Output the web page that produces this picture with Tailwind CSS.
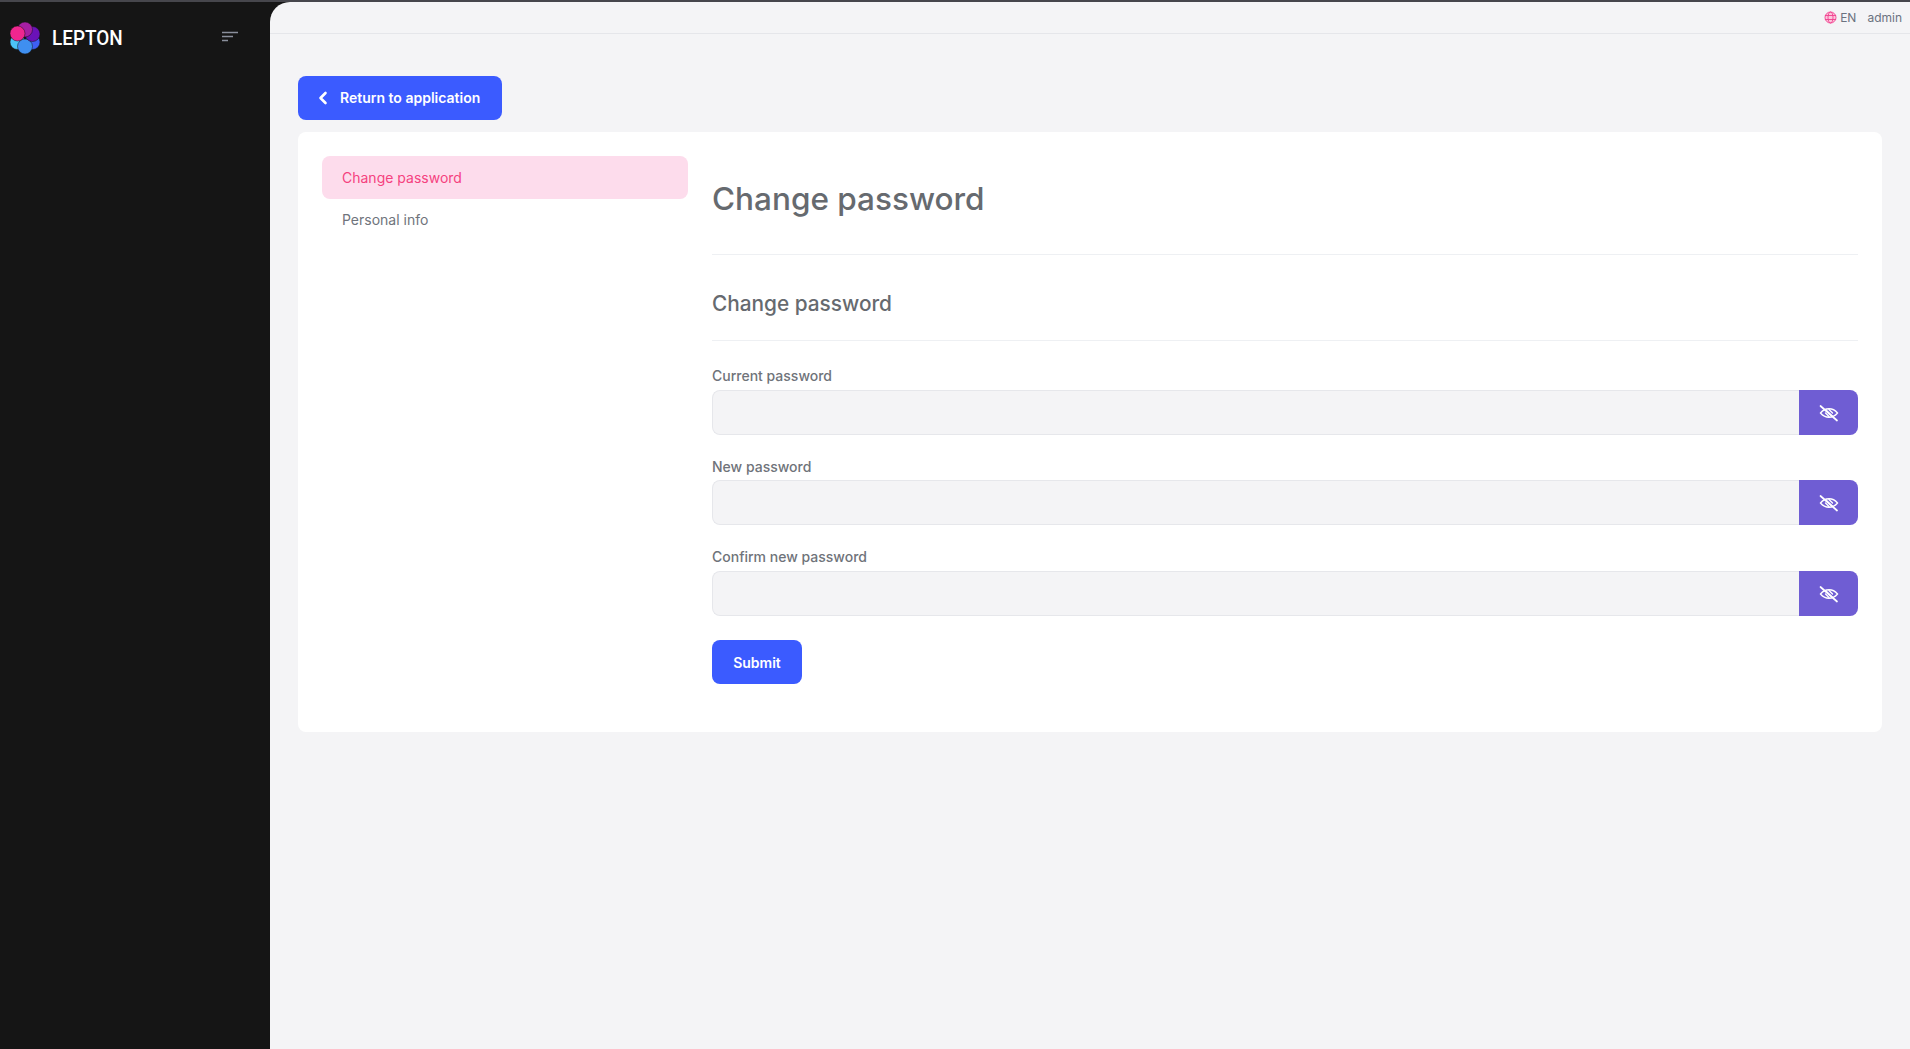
<!DOCTYPE html>
<html><head><meta charset="utf-8"><title>Change password</title>
<script src="https://cdn.jsdelivr.net/npm/@tailwindcss/browser@4"></script></head>
<body class="m-0 bg-[#151515] font-['Inter',sans-serif]">
<div class="h-[1049px] w-[1910px] overflow-hidden flex flex-col">
<div class="h-[2px] bg-[#46464c] shrink-0"></div>
<div class="flex flex-1 min-h-0">
<aside class="w-[270px] shrink-0 bg-[#151515]">
<div class="h-[70px] relative">
<svg class="absolute left-[9px] top-[18px]" width="32" height="34" viewBox="0 0 32 34" stroke="#151515" stroke-width="0.5">
<circle cx="8.500" cy="22" r="7.500" fill="#4cc3f7"/>
<circle cx="23.500" cy="22" r="7.500" fill="#3e5ff5"/>
<circle cx="16" cy="26.500" r="7.500" fill="#3f8ff0"/>
<circle cx="23.500" cy="14" r="7.500" fill="#6a12b8"/>
<circle cx="16" cy="9.500" r="7.500" fill="#a61fa3"/>
<circle cx="8.500" cy="13.500" r="7.500" fill="#f0268f"/>
</svg>
<span class="absolute left-[52px] top-[23px] text-[21px] leading-[26px] text-white font-medium font-['Roboto',sans-serif] scale-x-[0.9] origin-left">LEPTON</span>
<svg class="absolute left-[222px] top-[29px]" width="17" height="11" viewBox="0 0 17 11"><path d="M0 1.500H16M0 5.500H11M0 9.500H6" stroke="#8a8f9c" stroke-width="1.500"/></svg>
</div>
</aside>
<main class="flex-1 min-w-0 bg-[#f4f4f6] rounded-tl-[20px] flex flex-col">
<header class="h-[32px] shrink-0 border-b border-[#e5e6ea] flex items-center justify-end pr-[8px] gap-[11px] text-[12px] text-[#6b7280]">
<span class="flex items-center gap-[3px]"><svg width="13" height="13" viewBox="0 0 13 13" fill="none" stroke="#f0408f" stroke-width="0.900"><circle cx="6.500" cy="6.500" r="5.500" fill="#fcc6dc"/><ellipse cx="6.500" cy="6.500" rx="2.500" ry="5.500"/><path d="M1 4.500H12M1 8.500H12"/></svg>EN</span>
<span>admin</span>
</header>
<div class="pl-[28px] pr-[28px] pt-[42px]">
<button class="h-[44px] w-[204px] bg-[#3b5bff] rounded-[8px] text-white text-[14px] font-semibold flex items-center pl-[20px] pb-[1px] gap-[12px]">
<svg width="10" height="14" viewBox="0 0 10 14" fill="none" stroke="white" stroke-width="2.600" stroke-linecap="round" stroke-linejoin="round"><path d="M7.500 2L2.500 7L7.500 12"/></svg>Return to application</button>
<div class="mt-[12px] h-[600px] bg-white rounded-[8px] p-[24px] flex gap-[24px]">
<nav class="w-[366px] shrink-0 text-[14px]">
<div class="h-[43px] rounded-[8px] bg-[#fddcec] text-[#f5427f] flex items-center pl-[20px]">Change password</div>
<div class="h-[41px] text-[#6f747c] flex items-center pl-[20px]">Personal info</div>
</nav>
<div class="flex-1 min-w-0 text-[#5f6368]">
<h1 class="text-[31.5px] leading-[40px] font-medium pt-[23px] pb-[35px] border-b border-[#eef0f3] text-[#666a6f]">Change password</h1>
<h2 class="text-[20.8px] leading-[28px] font-medium pt-[35px] pb-[22px] border-b border-[#eef0f3] text-[#666a6f]">Change password</h2>
<form class="pt-[26px]">
<label class="block text-[14px] leading-[17px] font-medium text-[#6f737a] mb-[6px]">Current password</label>
<div class="flex h-[45px]"><div class="flex-1 bg-[#f4f4f6] border border-[#e6e7eb] border-r-0 rounded-l-[8px]"></div>
<div class="w-[59px] bg-[#6f5dd3] rounded-r-[8px] flex items-center justify-center"><svg width="20" height="18" viewBox="0 0 20 18" fill="none" stroke="white" stroke-width="1.400" stroke-linecap="round"><path d="M1.500 9C4 6 7 4.800 10 4.800S16 6 18.500 9C16 12 13 13.200 10 13.200S4 12 1.500 9Z"/><path d="M7 6L13 12M6.500 9L10 12.500M10 5.500L13.500 9"/><path d="M1.500 2L18 16.500" stroke-width="1.700"/></svg></div></div>
<label class="block text-[14px] leading-[17px] font-medium text-[#6f737a] mt-[23px] mb-[5px]">New password</label>
<div class="flex h-[45px]"><div class="flex-1 bg-[#f4f4f6] border border-[#e6e7eb] border-r-0 rounded-l-[8px]"></div>
<div class="w-[59px] bg-[#6f5dd3] rounded-r-[8px] flex items-center justify-center"><svg width="20" height="18" viewBox="0 0 20 18" fill="none" stroke="white" stroke-width="1.400" stroke-linecap="round"><path d="M1.500 9C4 6 7 4.800 10 4.800S16 6 18.500 9C16 12 13 13.200 10 13.200S4 12 1.500 9Z"/><path d="M7 6L13 12M6.500 9L10 12.500M10 5.500L13.500 9"/><path d="M1.500 2L18 16.500" stroke-width="1.700"/></svg></div></div>
<label class="block text-[14px] leading-[17px] font-medium text-[#6f737a] mt-[23px] mb-[6px]">Confirm new password</label>
<div class="flex h-[45px]"><div class="flex-1 bg-[#f4f4f6] border border-[#e6e7eb] border-r-0 rounded-l-[8px]"></div>
<div class="w-[59px] bg-[#6f5dd3] rounded-r-[8px] flex items-center justify-center"><svg width="20" height="18" viewBox="0 0 20 18" fill="none" stroke="white" stroke-width="1.400" stroke-linecap="round"><path d="M1.500 9C4 6 7 4.800 10 4.800S16 6 18.500 9C16 12 13 13.200 10 13.200S4 12 1.500 9Z"/><path d="M7 6L13 12M6.500 9L10 12.500M10 5.500L13.500 9"/><path d="M1.500 2L18 16.500" stroke-width="1.700"/></svg></div></div>
<button type="button" class="mt-[24px] block h-[44px] w-[90px] bg-[#3b5bff] rounded-[8px] text-white text-[14px] font-semibold">Submit</button>
</form>
</div>
</div>
</div>
</main>
</div>
</div>
</body></html>
